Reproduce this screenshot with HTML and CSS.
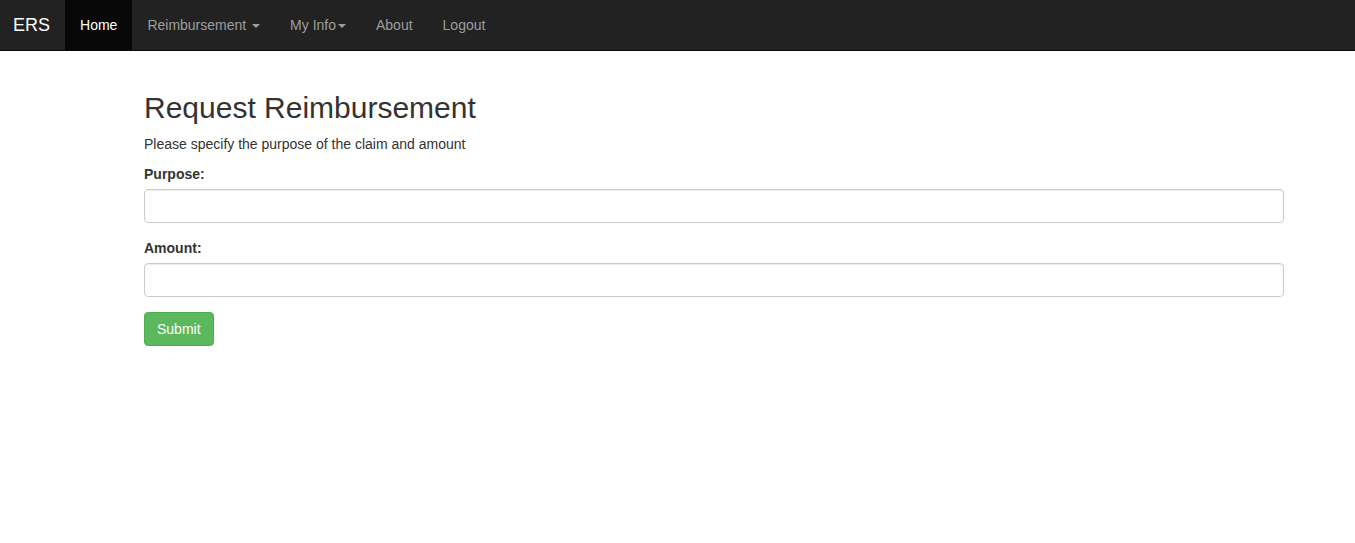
FILE: index.html
```html
<!DOCTYPE html>
<html lang="en">
<head>
<meta charset="utf-8">
<title>ERS</title>
<link rel="stylesheet" href="styles.css">
</head>
<body>
<nav class="navbar">
  <a class="brand" href="#">ERS</a>
  <ul class="nav">
    <li class="active"><a href="#">Home</a></li>
    <li><a href="#">Reimbursement <span class="caret"></span></a></li>
    <li><a href="#">My Info<span class="caret"></span></a></li>
    <li><a href="#">About</a></li>
    <li><a href="#">Logout</a></li>
  </ul>
</nav>
<main class="container">
  <h2 class="title">Request Reimbursement</h2>
  <p class="intro">Please specify the purpose of the claim and amount</p>
  <form class="form">
    <div class="form-group">
      <label class="label" for="purpose">Purpose:</label>
      <input class="form-control" id="purpose" type="text">
    </div>
    <div class="form-group">
      <label class="label" for="amount">Amount:</label>
      <input class="form-control" id="amount" type="text">
    </div>
    <button class="btn-success" type="button">Submit</button>
  </form>
</main>
</body>
</html>
```
FILE: styles.css
```css
* { box-sizing: border-box; }
html, body { margin: 0; padding: 0; }
body {
  font-family: "Liberation Sans", Arial, sans-serif;
  font-size: 14px;
  line-height: 20px;
  color: #333;
  background: #fff;
}
.navbar {
  display: flex;
  align-items: stretch;
  height: 51px;
  background: #222;
  border-bottom: 1px solid #080808;
  margin-bottom: 20px;
}
.brand {
  display: block;
  padding: 15px 15px 15px 13px;
  font-size: 18px;
  line-height: 20px;
  color: #fff;
  text-decoration: none;
}
.nav {
  display: flex;
  list-style: none;
  margin: 0;
  padding: 0;
}
.nav li a {
  display: block;
  padding: 15px;
  line-height: 20px;
  color: #9d9d9d;
  text-decoration: none;
}
.nav li.active a {
  background: #080808;
  color: #fff;
}
.caret {
  display: inline-block;
  width: 0;
  height: 0;
  margin-left: 2px;
  vertical-align: middle;
  border-top: 4px solid #9d9d9d;
  border-left: 4px solid transparent;
  border-right: 4px solid transparent;
}
.container {
  display: flow-root;
  width: 1170px;
  margin-left: 129px;
  padding: 0 15px;
}
.title {
  font-size: 30px;
  font-weight: 500;
  line-height: 33px;
  margin: 20px 0 10px;
  color: #333;
}
.intro { margin: 0 0 10px; }
.form { margin: 0; }
.form-group { margin-bottom: 15px; }
.label {
  display: block;
  font-weight: bold;
  margin-bottom: 5px;
}
.form-control {
  display: block;
  width: 100%;
  height: 34px;
  padding: 6px 12px;
  font: inherit;
  color: #555;
  background: #fff;
  border: 1px solid #ccc;
  border-radius: 4px;
  box-shadow: inset 0 1px 1px rgba(0,0,0,.075);
}
.btn-success {
  display: inline-block;
  height: 34px;
  padding: 6px 12px;
  font: inherit;
  line-height: 20px;
  color: #fff;
  background: #5cb85c;
  border: 1px solid #4cae4c;
  border-radius: 4px;
  cursor: pointer;
}
```
